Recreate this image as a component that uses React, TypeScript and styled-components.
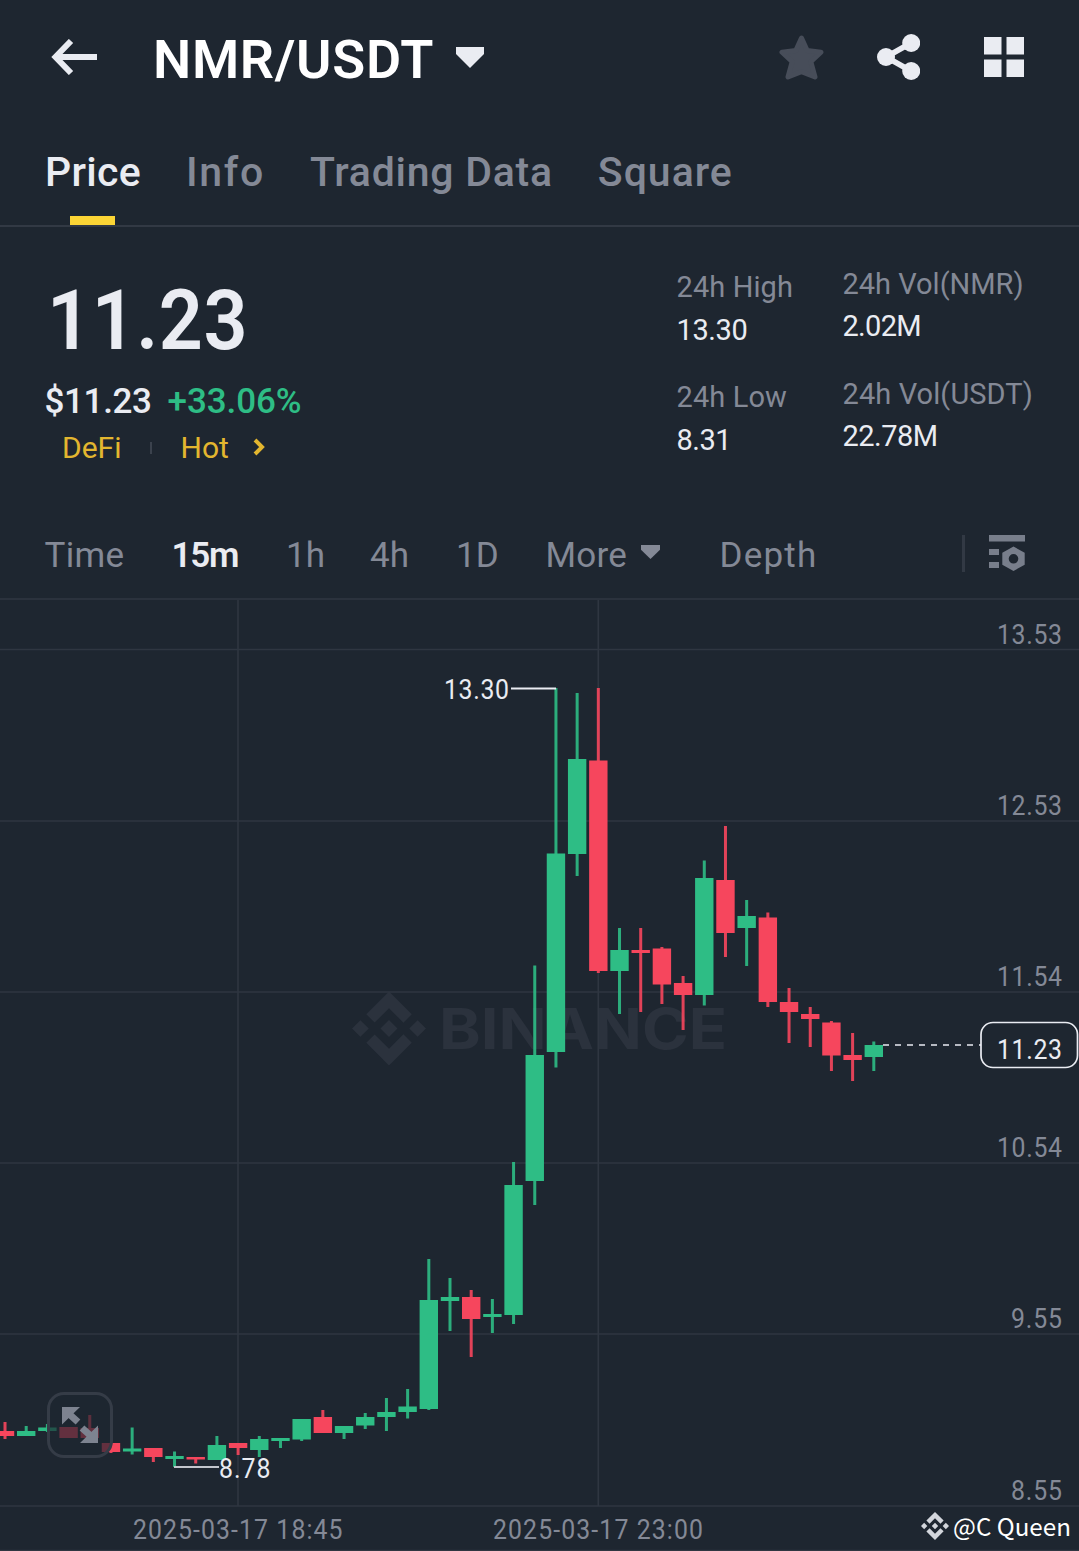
import React from "react";
import styled, { createGlobalStyle } from "styled-components";

const color = {
  bg: "#1e2630",
  line: "#2f3641",
  divider: "#323944",
  text: "#eaecf2",
  muted: "#848996",
  green: "#2ebd85",
  red: "#f6465d",
  yellow: "#fcd535",
  gold: "#e3b62f",
};

const Global = createGlobalStyle`
  html, body { margin: 0; background: ${color.bg}; }
  body { font-family: Roboto, "Liberation Sans", sans-serif; color: ${color.text}; }
  * { box-sizing: border-box; }
`;

const Screen = styled.main`
  display: flex;
  flex-direction: column;
  width: 1079px;
  height: 1551px;
  overflow: hidden;
  background: ${color.bg};
`;

const Header = styled.header`
  display: flex;
  align-items: center;
  height: 114px;
  padding: 0 55px 0 51px;
`;

const Pair = styled.h1`
  margin: 6px 0 0 56px;
  font-size: 54px;
  line-height: 64px;
  font-weight: 600;
  letter-spacing: 0.7px;
  color: #fff;
`;

const Actions = styled.div`
  display: flex;
  align-items: center;
  gap: 52.5px;
  margin-left: auto;
`;

const Tabs = styled.nav`
  display: flex;
  gap: 45px;
  height: 113px;
  padding-left: 45px;
  border-bottom: 2px solid ${color.divider};
`;

const Tab = styled.a<{ $active?: boolean; $spacing: number }>`
  display: flex;
  flex-direction: column;
  justify-content: space-between;
  align-items: center;
  height: 111px;
  padding-top: 33px;
  font-size: 41px;
  line-height: 50px;
  font-weight: 500;
  letter-spacing: ${(p) => p.$spacing}px;
  color: ${(p) => (p.$active ? color.text : color.muted)};
`;

const Underline = styled.span`
  width: 45px;
  height: 9px;
  background: ${color.yellow};
`;

const Summary = styled.section`
  display: flex;
  height: 283px;
`;

const PriceBlock = styled.div`
  display: flex;
  flex-direction: column;
  width: 676.5px;
  padding: 44px 0 0 44.5px;
`;

const BigPrice = styled.div`
  margin-left: 2px;
  font-size: 83px;
  line-height: 100px;
  font-weight: 600;
  letter-spacing: 0.6px;
  transform: scaleX(0.93);
  transform-origin: left;
`;

const SubPrice = styled.div`
  display: flex;
  gap: 16px;
  margin-top: 10px;
  font-size: 35px;
  line-height: 42px;
  font-weight: 500;
  letter-spacing: -0.35px;
`;

const Change = styled.span`
  color: ${color.green};
  letter-spacing: -0.1px;
`;

const Tags = styled.div`
  display: flex;
  align-items: center;
  padding-left: 17.5px;
  margin-top: 7px;
  font-size: 30px;
  line-height: 36px;
  color: ${color.gold};
`;

const TagDivider = styled.span`
  width: 2px;
  height: 12px;
  margin: 0 28px 0 29px;
  background: #3b424d;
`;

const Stats = styled.dl<{ $top: number; $width: number }>`
  width: ${(p) => p.$width}px;
  margin: ${(p) => p.$top}px 0 0;
`;

const StatLabel = styled.dt<{ $spacing: number }>`
  font-size: 29px;
  line-height: 42px;
  letter-spacing: ${(p) => p.$spacing}px;
  color: ${color.muted};
  white-space: nowrap;
`;

const StatValue = styled.dd<{ $spacing: number; $shift?: number }>`
  margin: 0 0 ${(p) => 25 - (p.$shift ?? 0)}px;
  padding-top: ${(p) => p.$shift ?? 0}px;
  font-size: 29px;
  line-height: 43px;
  letter-spacing: ${(p) => p.$spacing}px;
`;

const Intervals = styled.nav`
  display: flex;
  align-items: center;
  height: 88px;
  padding: 0 54px 0 44.5px;
`;

const Interval = styled.a<{ $active?: boolean; $width: number; $spacing: number }>`
  display: flex;
  align-items: center;
  width: ${(p) => p.$width}px;
  padding-top: 3px;
  font-size: 35px;
  line-height: 44px;
  font-weight: ${(p) => (p.$active ? 600 : 400)};
  letter-spacing: ${(p) => p.$spacing}px;
  color: ${(p) => (p.$active ? color.text : color.muted)};
`;

const Tools = styled.div`
  display: flex;
  align-items: center;
  gap: 24px;
  margin-left: auto;
  padding-bottom: 2px;
`;

const ToolDivider = styled.span`
  width: 3px;
  height: 37px;
  background: #323944;
`;

const ChartPanel = styled.section`
  position: relative;
  height: 953px;
`;

const ExpandButton = styled.button`
  position: absolute;
  left: 47px;
  top: 794px;
  display: grid;
  place-items: center;
  width: 66px;
  height: 66px;
  padding: 0;
  border: 3px solid #353c47;
  border-radius: 17px;
  background: rgba(30, 38, 48, 0.68);
`;

const Signature = styled.div`
  position: absolute;
  left: 921px;
  top: 910px;
  display: flex;
  align-items: center;
  gap: 4px;
  font: 400 24.2px/36px "Noto Sans CJK SC", "Noto Sans", sans-serif;
  color: #fff;
  white-space: nowrap;
`;

const PlainSvg = styled.svg`
  display: block;
  flex: none;
`;

const Caret = ({ w, h, fill, gap, lift = 0 }: { w: number; h: number; fill: string; gap: number; lift?: number }) => (
  <PlainSvg width={w} height={h + lift} viewBox={`0 0 28 ${(21 * (h + lift)) / h}`} preserveAspectRatio="none" style={{ marginLeft: gap }}>
    <path d="M0 0H28V7L14 21L0 7Z" fill={fill} />
  </PlainSvg>
);

const BinanceMark = ({ size, fill }: { size: number; fill: string }) => (
  <PlainSvg width={size} height={size} viewBox="0 0 126.6 126.6" fill={fill}>
    <path d="M38.7 53.2 63.3 28.6 88 53.3 102.3 38.9 63.3 0 24.4 38.9ZM0 63.3 14.3 49 28.7 63.3 14.3 77.6ZM38.7 73.4 63.3 98 88 73.3 102.3 87.6 63.3 126.6 24.4 87.7ZM98 63.3 112.3 49 126.6 63.3 112.3 77.6ZM77.8 63.3 63.3 48.7 48.7 63.3 63.3 77.9Z" />
  </PlainSvg>
);

type Candle = [up: 0 | 1, open: number, close: number, high: number, low: number];

// Newest candle first; values are vertical positions on the price scale.
const candles: Candle[] = [
  [1, 1045, 1057, 1041.5, 1071],
  [0, 1055, 1060, 1033, 1081],
  [0, 1022.5, 1055.5, 1021, 1071],
  [0, 1014, 1019, 1007, 1047],
  [0, 1002, 1012, 988, 1043],
  [0, 917.5, 1002, 912.5, 1007],
  [1, 916, 928, 900, 966],
  [0, 880, 933, 826, 957],
  [1, 878, 995, 860.5, 1005.5],
  [0, 983, 995, 976, 1030],
  [0, 948.5, 984.5, 947, 1004],
  [0, 950, 953, 928, 1012],
  [1, 950, 971, 928, 1014],
  [0, 760.5, 971, 688, 973],
  [1, 759, 854, 693, 876],
  [1, 853.5, 1052, 688, 1067.5],
  [1, 1055, 1181, 965.5, 1205],
  [1, 1185, 1315, 1162, 1324],
  [1, 1314, 1317, 1299, 1333],
  [0, 1297, 1319, 1290, 1357],
  [1, 1297, 1301, 1278, 1331],
  [1, 1300, 1409, 1259, 1410],
  [1, 1406.5, 1412, 1389, 1418.5],
  [1, 1412, 1417, 1398, 1431],
  [1, 1417, 1425.5, 1413, 1429],
  [1, 1426, 1433, 1426, 1439],
  [0, 1417, 1433, 1410, 1433],
  [1, 1419, 1439.5, 1419, 1441],
  [1, 1438, 1441, 1438, 1448],
  [1, 1439, 1450, 1436, 1457],
  [0, 1443, 1448, 1443, 1455],
  [1, 1445, 1460, 1436, 1460],
  [0, 1457, 1459.5, 1457, 1463.5],
  [1, 1456, 1459, 1451.5, 1467],
  [0, 1448, 1457, 1448, 1462],
  [1, 1448.5, 1451.5, 1427.5, 1454.5],
  [0, 1443, 1452, 1443, 1453],
  [0, 1428, 1438, 1415, 1438],
  [0, 1427, 1438, 1427, 1438],
  [1, 1427.5, 1431, 1424, 1432],
  [1, 1431, 1436, 1426, 1436],
  [0, 1431, 1436, 1422, 1439],
];

const levels: [string, number][] = [
  ["13.53", 649.5],
  ["12.53", 821],
  ["11.54", 992],
  ["10.54", 1163],
  ["9.55", 1334],
  ["8.55", 1506],
];

const LabelText = styled.text<{ $bright?: boolean }>`
  font-family: Roboto, sans-serif;
  font-size: 27px;
  fill: ${(p) => (p.$bright ? color.text : color.muted)};
`;

const SQUEEZE = 0.92;

const Label = ({ x, y, width, bright, children }: { x: number; y: number; width: number; bright?: boolean; children: string }) => (
  <LabelText $bright={bright} transform={`translate(${x} ${y}) scale(${SQUEEZE} 1)`} textLength={width / SQUEEZE}>
    {children}
  </LabelText>
);

const Wordmark = styled.text`
  font-family: Inter, sans-serif;
  font-size: 56px;
  font-weight: 700;
  fill: #2b323d;
`;

const Chart = () => (
  <PlainSvg width="1079" height="953" viewBox="0 598 1079 953">
    <rect x="0" y="597" width="1079" height="3" fill="#2b323d" />
    <g transform="translate(352 991.5)">
      <BinanceMark size={74} fill="#2b323d" />
    </g>
    <Wordmark x="439" y="1049" textLength="288" lengthAdjust="spacingAndGlyphs">
      BINANCE
    </Wordmark>
    <g stroke={color.line} strokeWidth="1.6">
      {levels.map(([label, y]) => (
        <line key={label} x1="0" x2="1079" y1={y} y2={y} />
      ))}
      <line x1="238" x2="238" y1="600" y2="1506" />
      <line x1="598.3" x2="598.3" y1="600" y2="1506" />
      <line x1="0" x2="1079" y1="1550.5" y2="1550.5" />
    </g>
    {levels.map(([label, y]) => (
      <Label key={label} x={label.length > 4 ? 997 : 1011} y={y - 6} width={label.length > 4 ? 65 : 51}>
        {label}
      </Label>
    ))}
    {candles.map(([up, top, bottom, high, low], i) => {
      const x = 873.8 - i * 21.19;
      return (
        <g key={i} fill={up ? color.green : color.red}>
          <rect x={x - 1.5} y={high} width="3" height={low - high} opacity="0.9" />
          <rect x={x - 9.2} y={top} width="18.4" height={bottom - top} />
        </g>
      );
    })}
    <g stroke={color.text} fill="none">
      <path d="M511 688.5H556" strokeWidth="1.8" />
      <path d="M174 1467H219" strokeWidth="1.8" stroke="#c3c6cd" />
      <path d="M883 1045H981" strokeWidth="1.7" strokeDasharray="6 6" />
      <rect x="981" y="1022.5" width="96.5" height="45" rx="12" strokeWidth="1.7" fill={color.bg} />
    </g>
    <Label bright x={444} y={699} width={65}>13.30</Label>
    <Label bright x={219} y={1477.5} width={51.5}>8.78</Label>
    <Label bright x={997} y={1058.7} width={65}>11.23</Label>
    <Label x={133} y={1539} width={209.5}>2025-03-17 18:45</Label>
    <Label x={493} y={1539} width={210}>2025-03-17 23:00</Label>
  </PlainSvg>
);

export default function App() {
  return (
    <Screen>
      <Global />
      <Header>
        <PlainSvg width="46" height="36" viewBox="0 0 46 36" fill="none" stroke={color.text} strokeWidth="6">
          <path d="M20 2 4.5 18 20 34M5 18H46" />
        </PlainSvg>
        <Pair>NMR/USDT</Pair>
        <Caret w={28} h={21} lift={0} fill={color.text} gap={22} />
        <Actions>
          <PlainSvg width="45" height="45" viewBox="0 0 45 45">
            <path
              d="M22.5 3 28.2 15.6 42 17.2 31.8 26.6 36 42 22.5 36.6 9 42 13.2 26.6 3 17.2 16.8 15.6Z"
              fill="#474d59"
              stroke="#474d59"
              strokeWidth="5"
              strokeLinejoin="round"
            />
          </PlainSvg>
          <PlainSvg width="43" height="46" viewBox="0 0 43 46" fill={color.text}>
            <path d="M34 9 9 23 34 37" fill="none" stroke={color.text} strokeWidth="5.5" />
            <circle cx="9" cy="23" r="9" />
            <circle cx="34.2" cy="9" r="9" />
            <circle cx="34.2" cy="37" r="9" />
          </PlainSvg>
          <PlainSvg width="52" height="40" viewBox="-12 0 52 40" fill={color.text}>
            <path d="M0 0H17.5V17.5H0ZM22.5 0H40V17.5H22.5ZM0 22.5H17.5V40H0ZM22.5 22.5H40V40H22.5Z" />
          </PlainSvg>
        </Actions>
      </Header>
      <Tabs>
        <Tab $active $spacing={0.3}>
          Price
          <Underline />
        </Tab>
        <Tab $spacing={1.7}>Info</Tab>
        <Tab $spacing={0.75}>Trading Data</Tab>
        <Tab $spacing={1}>Square</Tab>
      </Tabs>
      <Summary>
        <PriceBlock>
          <BigPrice>11.23</BigPrice>
          <SubPrice>
            <span>$11.23</span>
            <Change>+33.06%</Change>
          </SubPrice>
          <Tags>
            <span>DeFi</span>
            <TagDivider />
            <span>Hot</span>
            <PlainSvg width="12" height="20" viewBox="0 0 12 20" style={{ marginLeft: 24 }}>
              <path d="M2 2 9 9 2 16" fill="none" stroke={color.gold} strokeWidth="4" />
            </PlainSvg>
          </Tags>
        </PriceBlock>
        <Stats $top={39} $width={166}>
          <StatLabel $spacing={0.1}>24h High</StatLabel>
          <StatValue $spacing={-0.4} $shift={1}>13.30</StatValue>
          <StatLabel $spacing={0.1}>24h Low</StatLabel>
          <StatValue $spacing={-0.5} $shift={1}>8.31</StatValue>
        </Stats>
        <Stats $top={36} $width={200}>
          <StatLabel $spacing={0}>24h Vol(NMR)</StatLabel>
          <StatValue $spacing={-0.7}>2.02M</StatValue>
          <StatLabel $spacing={0.1}>24h Vol(USDT)</StatLabel>
          <StatValue $spacing={-0.5}>22.78M</StatValue>
        </Stats>
      </Summary>
      <Intervals>
        <Interval $width={127} $spacing={0.3}>Time</Interval>
        <Interval $width={114.5} $spacing={-1.3} $active>15m</Interval>
        <Interval $width={84} $spacing={0}>1h</Interval>
        <Interval $width={86} $spacing={0}>4h</Interval>
        <Interval $width={89.5} $spacing={0}>1D</Interval>
        <Interval $width={174} $spacing={0.2}>
          More
          <Caret w={19} h={14} lift={7} fill={color.muted} gap={14} />
        </Interval>
        <Interval $width={110} $spacing={1.2}>Depth</Interval>
        <Tools>
          <ToolDivider />
          <PlainSvg width="36" height="36" viewBox="0 0 36 36" fill="#787e8b">
            <path d="M0 0H36V6.5H0ZM0 14H10V20H0ZM0 27H10V33H0Z" />
            <path fillRule="evenodd" d="M24.5 11.5 35.7 17.7V29.7L24.5 36 13.3 29.7V17.7ZM24.5 19A4.8 4.8 0 1 0 24.5 28.6A4.8 4.8 0 1 0 24.5 19Z" />
          </PlainSvg>
        </Tools>
      </Intervals>
      <ChartPanel>
        <Chart />
        <ExpandButton aria-label="Full screen">
          <PlainSvg width="36" height="36" viewBox="0 0 36 36" fill="#7d8390" stroke="#7d8390">
            <path d="M0 0H18L0 17.5ZM36 36H18L36 18.5Z" stroke="none" />
            <path d="M6 6 16 15M20 21 30 30" strokeWidth="7" />
          </PlainSvg>
        </ExpandButton>
        <Signature>
          <BinanceMark size={28} fill="#d3d6dc" />
          @C Queen
        </Signature>
      </ChartPanel>
    </Screen>
  );
}
